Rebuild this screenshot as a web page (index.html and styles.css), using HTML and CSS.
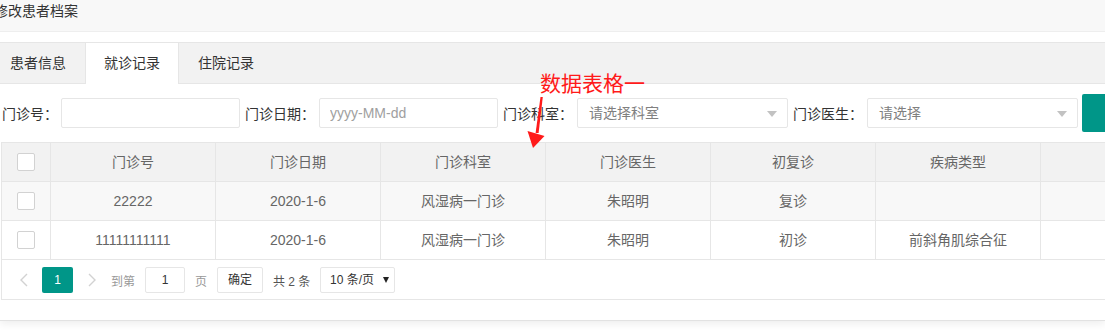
FILE: index.html
```html
<!DOCTYPE html>
<html lang="zh-CN">
  <head>
    <meta charset="UTF-8" />
    <meta name="viewport" content="width=device-width, initial-scale=1.0" />
    <title>修改患者档案</title>
    <link rel="stylesheet" href="styles.css">
  </head>

  <body>
    <div class="card">
      <div class="cardHeader">修改患者档案</div>

      <div class="cardBody">
        <ul class="tabTitle">
          <li>患者信息</li>
          <li class="this">就诊记录</li>
          <li>住院记录</li>
        </ul>

        <div class="searchRow">
          <label class="formLabel lblShort">门诊号：</label>
          <input class="formInput inNo" type="text" />
          <label class="formLabel">门诊日期：</label>
          <input class="formInput inDate" type="text" placeholder="yyyy-MM-dd" />
          <label class="formLabel">门诊科室：</label>
          <div class="formSelect">
            <span class="selectText">请选择科室</span>
            <i class="selectArrow"></i>
          </div>
          <label class="formLabel">门诊医生：</label>
          <div class="formSelect">
            <span class="selectText">请选择</span>
            <i class="selectArrow"></i>
          </div>
          <button class="btnSearch" type="button">查询</button>
        </div>

        <div class="tableBox">
          <table class="dataTable">
            <thead>
              <tr>
                <th class="colCheck"><span class="checkbox"></span></th>
                <th>门诊号</th>
                <th>门诊日期</th>
                <th>门诊科室</th>
                <th>门诊医生</th>
                <th>初复诊</th>
                <th>疾病类型</th>
                <th></th>
              </tr>
            </thead>
            <tbody>
              <tr class="rowHover">
                <td class="colCheck"><span class="checkbox"></span></td>
                <td>22222</td>
                <td>2020-1-6</td>
                <td>风湿病一门诊</td>
                <td>朱昭明</td>
                <td>复诊</td>
                <td></td>
                <td></td>
              </tr>
              <tr>
                <td class="colCheck"><span class="checkbox"></span></td>
                <td>11111111111</td>
                <td>2020-1-6</td>
                <td>风湿病一门诊</td>
                <td>朱昭明</td>
                <td>初诊</td>
                <td>前斜角肌综合征</td>
                <td></td>
              </tr>
            </tbody>
          </table>

          <div class="pageBar">
            <span class="pagePrev">
              <svg width="9" height="14" viewBox="0 0 9 14"><path d="M8 1 L2 7 L8 13" fill="none" stroke="#d2d2d2" stroke-width="1.4"/></svg>
            </span>
            <span class="pageCurr">1</span>
            <span class="pageNext">
              <svg width="9" height="14" viewBox="0 0 9 14"><path d="M1 1 L7 7 L1 13" fill="none" stroke="#d2d2d2" stroke-width="1.4"/></svg>
            </span>
            <span class="pageSkip">到第</span>
            <span class="pageInput">1</span>
            <span class="pageSkip pageUnit">页</span>
            <span class="pageBtn">确定</span>
            <span class="pageCount">共 2 条</span>
            <span class="pageLimit">10 条/页<i class="limitArrow"></i></span>
          </div>
        </div>
      </div>
    </div>

    <div class="markText">数据表格一</div>
    <svg class="markArrow" width="1105" height="330" viewBox="0 0 1105 330">
      <polygon points="540.5,97 542.8,97 538.6,133 535.6,133" fill="#ff1a1a" />
      <polygon points="527.5,131 544.5,136 533,148" fill="#ff1a1a" />
    </svg>
  </body>
</html>
```

FILE: styles.css
```css
* {
  margin: 0px;
  padding: 0px;
  box-sizing: border-box;
}
body {
  width: 1105px;
  height: 330px;
  overflow: hidden;
  background-color: #fff;
  color: #333;
  font-family: "Liberation Sans", "Noto Sans CJK SC", sans-serif;
  font-size: 14px;
  position: relative;
}

.card {
  width: 1105px;
  background-color: #fff;
  border-bottom: 1px solid #e2e2e2;
  box-shadow: 0 3px 8px rgba(0, 0, 0, 0.07);
  padding-bottom: 20px;
}
.cardHeader {
  height: 32px;
  line-height: 22px;
  background-color: #f8f8f8;
  border-bottom: 1px solid #eeeeee;
  text-indent: -6px;
  white-space: nowrap;
}

.cardBody {
  padding-top: 10px;
}

.tabTitle {
  list-style: none;
  display: flex;
  align-items: flex-start;
  height: 42px;
  background-color: #f2f2f2;
  border-top: 1px solid #e6e6e6;
  border-bottom: 1px solid #e6e6e6;
  padding-left: 0px;
  margin-left: -9px;
}
.tabTitle li {
  height: 40px;
  line-height: 40px;
  padding: 0 18px;
  border-left: 1px solid transparent;
  border-right: 1px solid transparent;
  white-space: nowrap;
}
.tabTitle li.this {
  height: 41px;
  background-color: #fff;
  border-left: 1px solid #e6e6e6;
  border-right: 1px solid #e6e6e6;
}

.searchRow {
  display: flex;
  align-items: center;
  height: 38px;
  margin-top: 10px;
  padding-left: 2px;
  white-space: nowrap;
}
.searchRow > * {
  flex-shrink: 0;
}
.formLabel {
  width: 74px;
  color: #333;
}
.lblShort {
  width: 59px;
}
.formInput {
  height: 30px;
  border: 1px solid #e6e6e6;
  border-radius: 2px;
  padding-left: 10px;
  font-family: inherit;
  font-size: 14px;
  color: #333;
  outline: none;
  margin-right: 5px;
}
.formInput::placeholder {
  color: #a0a0a0;
}
.inNo {
  width: 179px;
}
.inDate {
  width: 179px;
}
.formSelect {
  position: relative;
  width: 211px;
  height: 30px;
  line-height: 28px;
  border: 1px solid #e6e6e6;
  border-radius: 2px;
  padding-left: 11px;
  margin-right: 5px;
}
.selectText {
  color: #808080;
}
.selectArrow {
  position: absolute;
  right: 10px;
  top: 12px;
  width: 0;
  height: 0;
  border-left: 5px solid transparent;
  border-right: 5px solid transparent;
  border-top: 6px solid #c2c2c2;
}
.btnSearch {
  height: 38px;
  margin-left: -1px;
  padding: 0 28px;
  border: none;
  border-radius: 2px;
  background-color: #009688;
  color: #fff;
  font-family: inherit;
  font-size: 14px;
}

.tableBox {
  margin-top: 10px;
  margin-left: 1px;
}
.dataTable {
  border-collapse: separate;
  border-spacing: 0;
  table-layout: fixed;
  width: 1204px;
  border-top: 1px solid #e6e6e6;
  border-left: 1px solid #e6e6e6;
}
.dataTable th,
.dataTable td {
  width: 165px;
  padding: 0;
  line-height: 38px;
  border-right: 1px solid #e6e6e6;
  border-bottom: 1px solid #e6e6e6;
  text-align: center;
  font-weight: normal;
  color: #666;
  white-space: nowrap;
}
.dataTable th.colCheck,
.dataTable td.colCheck {
  width: 49px;
}
.dataTable thead tr {
  background-color: #f2f2f2;
}
.dataTable .rowHover {
  background-color: #f8f8f8;
}
.checkbox {
  display: inline-block;
  width: 18px;
  height: 18px;
  vertical-align: middle;
  border: 1px solid #d2d2d2;
  border-radius: 2px;
  background-color: #fff;
  margin-top: -3px;
}

.pageBar {
  display: flex;
  align-items: center;
  height: 40px;
  padding-top: 1px;
  padding-left: 1px;
  border-left: 1px solid #e6e6e6;
  border-bottom: 1px solid #e6e6e6;
  font-size: 12px;
  white-space: nowrap;
}
.pageBar > * {
  flex-shrink: 0;
}
.pagePrev,
.pageNext {
  display: flex;
  width: 9px;
}
.pagePrev {
  margin-left: 16px;
}
.pageCurr {
  width: 31px;
  height: 26px;
  line-height: 26px;
  margin-left: 14px;
  text-align: center;
  background-color: #009688;
  color: #fff;
  border-radius: 2px;
}
.pageNext {
  margin-left: 15px;
}
.pageSkip {
  margin-left: 14px;
  color: #999;
}
.pageUnit {
  margin-left: 10px;
}
.pageInput,
.pageBtn,
.pageLimit {
  height: 26px;
  line-height: 24px;
  border: 1px solid #e6e6e6;
  border-radius: 2px;
  background-color: #fff;
  color: #333;
}
.pageInput {
  width: 40px;
  margin-left: 10px;
  text-align: center;
}
.pageBtn {
  width: 46px;
  margin-left: 10px;
  text-align: center;
}
.pageCount {
  width: 37px;
  margin-left: 10px;
  margin-right: 10px;
  color: #555;
}
.pageLimit {
  position: relative;
  width: 75px;
  padding-left: 9px;
}
.limitArrow {
  position: absolute;
  left: 62px;
  top: 9px;
  width: 0;
  height: 0;
  border-left: 3px solid transparent;
  border-right: 3px solid transparent;
  border-top: 6px solid #222;
}

/* annotation drawn over the screenshot */
.markText {
  position: absolute;
  left: 540px;
  top: 70px;
  font-size: 21px;
  line-height: 24px;
  color: #ff1a1a;
  font-family: "Noto Sans CJK SC", sans-serif;
  white-space: nowrap;
}
.markArrow {
  position: absolute;
  left: 0;
  top: 0;
  pointer-events: none;
}
```
